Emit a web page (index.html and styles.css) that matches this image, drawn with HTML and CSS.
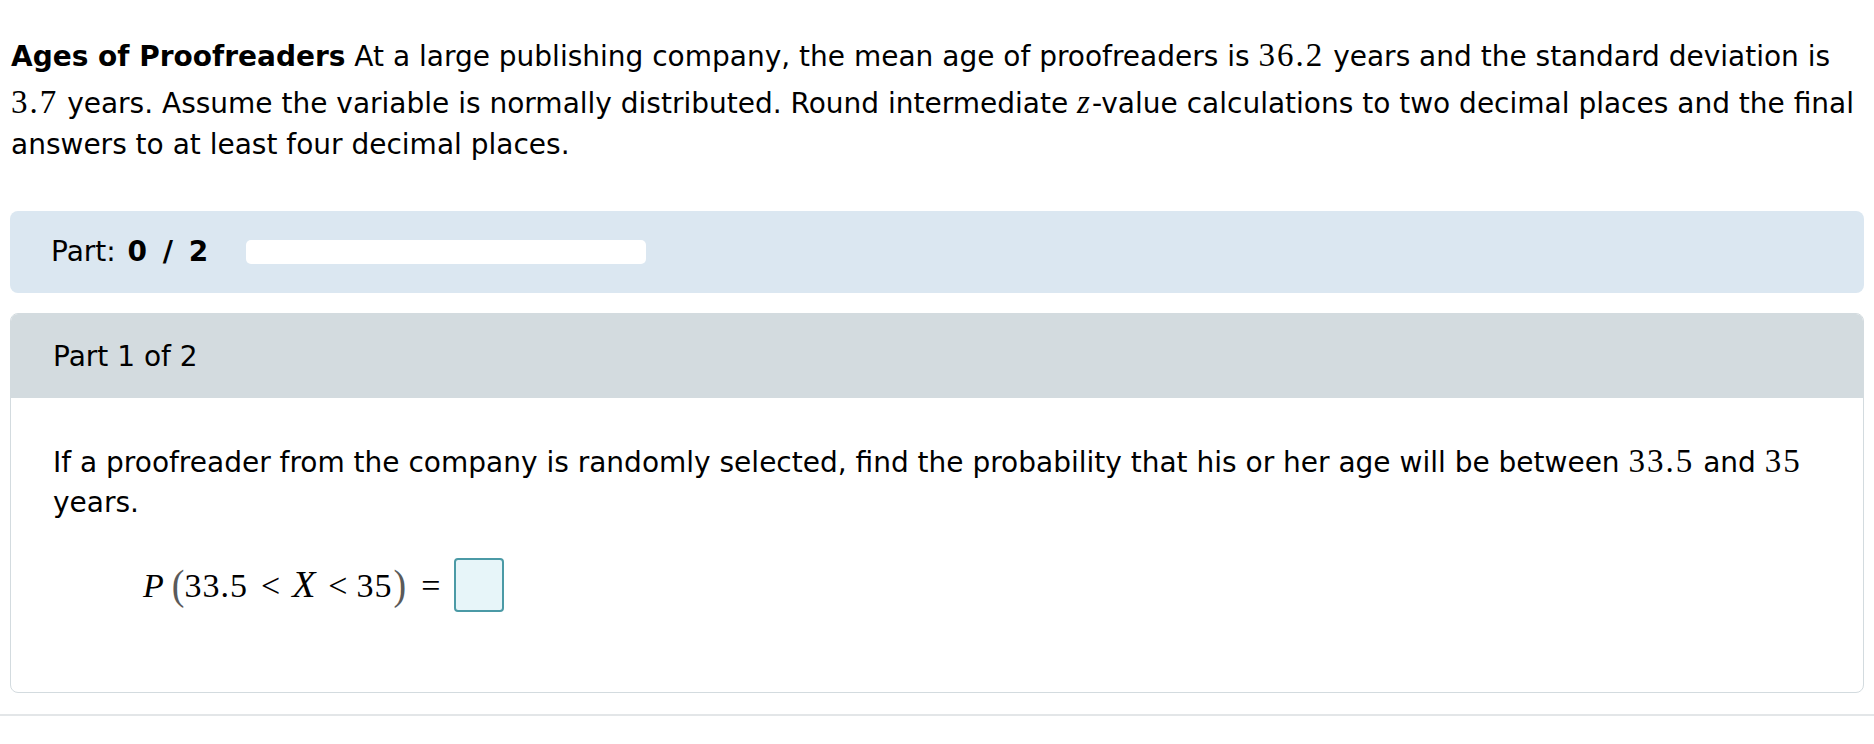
FILE: index.html
```html
<!DOCTYPE html>
<html>
<head>
<meta charset="utf-8">
<link rel="stylesheet" href="styles.css">
</head>
<body>
<div class="page">
  <p class="intro"><b>Ages of Proofreaders</b> At a large publishing company, the mean age of proofreaders is <span class="m m-deep">36.2</span> years and the standard deviation is <span class="m">3.7</span> years. Assume the variable is normally distributed. Round intermediate <span class="m mi">z</span>-value calculations to two decimal places and the final answers to at least four decimal places.</p>

  <div class="progress">
    <span class="progress-label">Part: <b class="progress-count">0 / 2</b></span>
    <span class="progress-bar"></span>
  </div>

  <div class="card">
    <div class="card-head">Part 1 of 2</div>
    <div class="card-body">
      <p class="question">If a proofreader from the company is randomly selected, find the probability that his or her age will be between <span class="m">33.5</span> and <span class="m">35</span> years.</p>
      <div class="eq">
        <span class="eq-text"><span class="mi eq-p">P</span><span class="paren paren-l">(</span><span class="num">33.5</span><span class="rel">&lt;</span><span class="mi eq-x">X</span><span class="rel">&lt;</span><span class="num">35</span><span class="paren paren-r">)</span><span class="eqs">=</span></span>
        <span class="answer"></span>
      </div>
    </div>
  </div>
  <div class="rule"></div>
</div>
</body>
</html>
```

FILE: styles.css
```css
html, body {
  margin: 0;
  padding: 0;
  background: #ffffff;
}

body {
  font-family: "DejaVu Sans", Verdana, sans-serif;
  font-size: 28px;
  color: #000;
}

.page {
  padding: 36px 10px 0 10px;
}

.intro {
  margin: 0;
  line-height: 41px;
  padding: 0 1px;
}

.m {
  font-family: "Liberation Serif", "Times New Roman", serif;
  font-size: 33px;
  letter-spacing: 2px;
  line-height: 1;
}

.m-deep {
  display: inline-block;
  line-height: 30px;
  margin-bottom: 13px;
}

.mi {
  font-style: italic;
}

.progress {
  margin-top: 46px;
  height: 82px;
  background: #dbe7f1;
  border-radius: 8px;
  display: flex;
  align-items: center;
  padding-left: 41px;
}

.progress-label {
  line-height: 30px;
}

.progress-count {
  margin-left: 3px;
  letter-spacing: 1.5px;
  word-spacing: 3px;
}

.progress-bar {
  margin-left: 36px;
  width: 400px;
  height: 24px;
  background: #ffffff;
  border-radius: 5px;
}

.card {
  margin-top: 20px;
  border: 1.5px solid #d3dbdf;
  border-radius: 8px;
  overflow: hidden;
}

.card-head {
  height: 84px;
  background: #d3dbdf;
  display: flex;
  align-items: center;
  padding-left: 42px;
}

.card-body {
  padding: 45px 42px 79px 42px;
}

.question {
  margin: 0;
  line-height: 40px;
}

.eq {
  margin-top: 34px;
  display: flex;
  align-items: center;
  padding-left: 90px;
}

.eq-text {
  font-family: "Liberation Serif", "Times New Roman", serif;
  font-size: 34px;
  line-height: 54px;
  white-space: nowrap;
}

.num {
  letter-spacing: 1px;
}

.eq-p {
  margin-right: 8px;
}

.paren {
  color: #5a5a5a;
  font-size: 38px;
  font-style: normal;
  display: inline-block;
  transform: scaleY(1.1) translateY(1px);
}

.paren-r {
  margin-left: 1px;
}

.rel {
  margin: 0 9px 0 13px;
}

.eq-x {
  font-size: 38px;
  line-height: 1;
  margin-left: 3px;
  margin-right: 0;
}

.eqs {
  margin-left: 15px;
}

.answer {
  margin-left: 14px;
  width: 46px;
  height: 50px;
  border: 2px solid #4b9aa6;
  border-radius: 4px;
  background: #e7f5f9;
}

.rule {
  margin: 21px -10px 0 -10px;
  height: 2px;
  background: #e3e6e8;
}
```
